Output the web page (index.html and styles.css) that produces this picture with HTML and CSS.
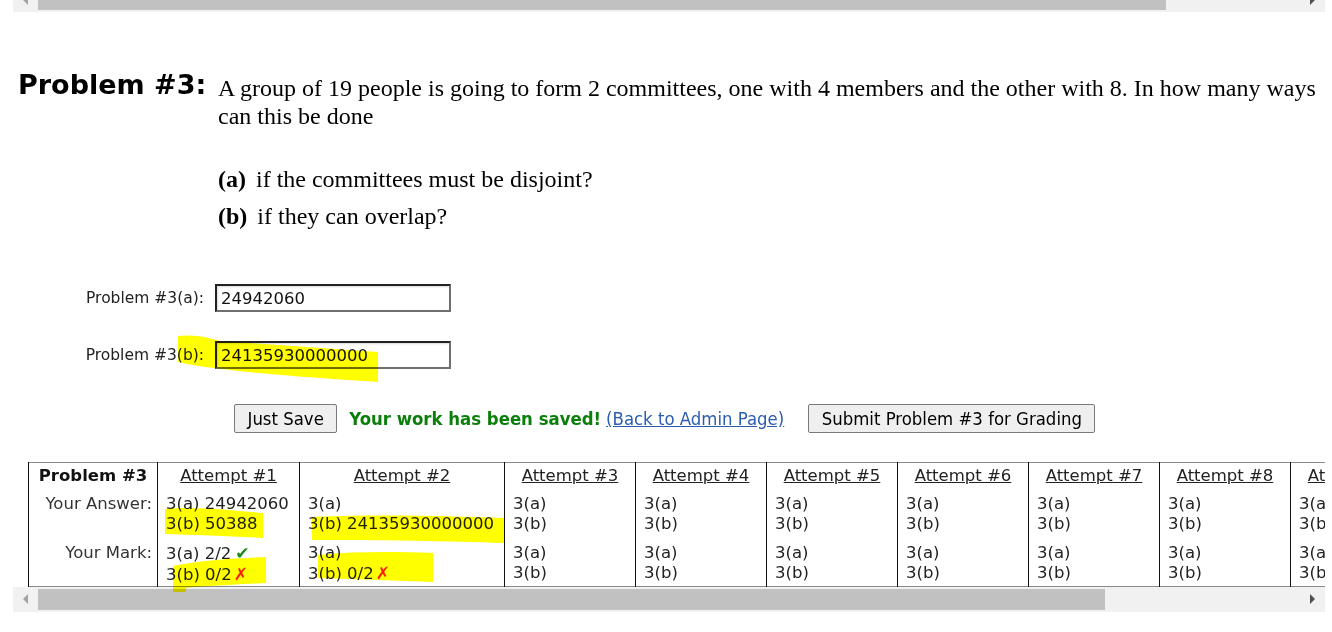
FILE: index.html
```html
<!DOCTYPE html>
<html>
<head>
<meta charset="utf-8">
<link rel="stylesheet" href="styles.css">
</head>
<body>
<div class="topscroll">
  <div class="sbar">
    <span class="sarrow sleft"></span>
    <div class="strack"><div class="sthumb top-thumb"></div></div>
    <span class="sarrow sright"></span>
  </div>
</div>

<div class="problem">
  <h2 class="ptitle">Problem #3:</h2>
  <div class="pbody">
    <p class="stmt">A group of 19 people is going to form 2 committees, one with 4 members and the other with 8. In how many ways can this be done</p>
    <div class="parts">
      <div class="part"><b class="plabel">(a)</b>if the committees must be disjoint?</div>
      <div class="part"><b class="plabel">(b)</b>if they can overlap?</div>
    </div>
  </div>
</div>

<div class="answers">
  <div class="arow"><label class="alabel">Problem #3(a):</label><input class="ainput" type="text" value="24942060"></div>
  <div class="arow"><label class="alabel">Problem #3(b):</label><input class="ainput" type="text" value="24135930000000"></div>
</div>

<div class="actions">
  <button class="btn">Just Save</button>
  <span class="saved">Your work has been saved!</span>
  <a class="back" href="#">(Back to Admin Page)</a>
  <button class="btn submit">Submit Problem #3 for Grading</button>
</div>

<div class="tablewrap">
  <div class="tableclip">
    <table class="attempts">
      <colgroup>
        <col class="c0"><col class="c1"><col class="c2"><col class="cn"><col class="cn"><col class="cn"><col class="cn"><col class="cn"><col class="cn"><col class="cn">
      </colgroup>
      <tr class="hrow">
        <th class="rowhead">Problem #3</th>
        <th><a href="#">Attempt #1</a></th>
        <th><a href="#">Attempt #2</a></th>
        <th><a href="#">Attempt #3</a></th>
        <th><a href="#">Attempt #4</a></th>
        <th><a href="#">Attempt #5</a></th>
        <th><a href="#">Attempt #6</a></th>
        <th><a href="#">Attempt #7</a></th>
        <th><a href="#">Attempt #8</a></th>
        <th><a href="#">Attempt #9</a></th>
      </tr>
      <tr class="ansrow">
        <td class="rowlabel">Your Answer:</td>
        <td>3(a) 24942060<br>3(b) 50388</td>
        <td>3(a)<br>3(b) 24135930000000</td>
        <td>3(a)<br>3(b)</td>
        <td>3(a)<br>3(b)</td>
        <td>3(a)<br>3(b)</td>
        <td>3(a)<br>3(b)</td>
        <td>3(a)<br>3(b)</td>
        <td>3(a)<br>3(b)</td>
        <td>3(a)<br>3(b)</td>
      </tr>
      <tr class="markrow">
        <td class="rowlabel">Your Mark:</td>
        <td>3(a) 2/2<span class="ok">✔</span><br>3(b) 0/2<span class="bad">✗</span></td>
        <td>3(a)<br>3(b) 0/2<span class="bad">✗</span></td>
        <td>3(a)<br>3(b)</td>
        <td>3(a)<br>3(b)</td>
        <td>3(a)<br>3(b)</td>
        <td>3(a)<br>3(b)</td>
        <td>3(a)<br>3(b)</td>
        <td>3(a)<br>3(b)</td>
        <td>3(a)<br>3(b)</td>
      </tr>
    </table>
  </div>
  <div class="sbar bottom">
    <span class="sarrow sleft"></span>
    <div class="strack"><div class="sthumb bottom-thumb"></div></div>
    <span class="sarrow sright"></span>
  </div>
</div>

<svg class="marks" width="1332" height="632" viewBox="0 0 1332 632" aria-hidden="true">
  <path d="M178,336 C195,334 210,338 220,341 L378,352 L378,382 C330,379 270,375 222,369 C205,367 190,365 178,362 Z"/>
  <path d="M165,509 C190,506 230,510 263,513 L263,538 C230,536 195,535 165,534 Z"/>
  <path d="M312,517 C380,514 450,516 504,518 L504,543 C450,541 380,540 312,540 Z"/>
  <path d="M318,555 C360,551 400,552 433,553 L433,582 C400,581 360,579 318,578 Z"/>
  <path d="M173,566 C200,560 240,558 266,557 L266,583 C230,585 200,586 186,588 L186,592 L173,592 Z"/>
</svg>
</body>
</html>
```

FILE: styles.css
```css
html, body {
  margin: 0;
  padding: 0;
  background: #ffffff;
}
body {
  width: 1332px;
  height: 632px;
  overflow: hidden;
  position: relative;
  font-family: "DejaVu Sans", Verdana, sans-serif;
  color: #111;
}

/* fake scrollbars */
.topscroll {
  height: 12px;
  overflow: hidden;
  display: flex;
  align-items: flex-end;
  margin-left: 13px;
  width: 1312px;
}
.sbar {
  display: flex;
  align-items: center;
  background: #f1f1f1;
  height: 24px;
  width: 1312px;
  flex: none;
}
.sbar.bottom {
  height: 25px;
}
.sarrow {
  width: 25px;
  height: 100%;
  display: flex;
  align-items: center;
  justify-content: center;
  flex: none;
}
.sarrow::before {
  content: "";
  display: block;
  width: 0;
  height: 0;
  border-top: 5px solid transparent;
  border-bottom: 5px solid transparent;
}
.sleft::before {
  border-right: 5px solid #a3a3a3;
}
.sright::before {
  border-left: 5px solid #505050;
}
.strack {
  flex: 1;
  height: 100%;
  display: flex;
  align-items: center;
}
.sthumb {
  background: #c1c1c1;
  height: calc(100% - 4px);
}
.top-thumb { width: 1128px; }
.bottom-thumb { width: 1067px; }

/* problem statement */
.problem {
  display: flex;
  padding-left: 18px;
  margin-top: 59px;
}
.ptitle {
  margin: 0;
  width: 200px;
  flex: none;
  font-family: "DejaVu Sans", Verdana, sans-serif;
  font-weight: bold;
  font-size: 27px;
  line-height: 27px;
  color: #000;
}
.pbody {
  width: 1108px;
  font-family: "Liberation Serif", "Times New Roman", serif;
  font-size: 24px;
  color: #000;
}
.stmt {
  margin: 0;
  line-height: 28px;
  padding-top: 3px;
}
.parts {
  margin-top: 36px;
  display: flex;
  flex-direction: column;
  gap: 11px;
}
.part {
  line-height: 26px;
}
.plabel {
  margin-right: 10px;
}

/* answers */
.answers {
  margin-top: 55px;
  display: flex;
  flex-direction: column;
  gap: 29px;
}
.arow {
  display: flex;
  align-items: center;
  height: 28px;
}
.alabel {
  width: 215px;
  text-align: right;
  padding-right: 11px;
  box-sizing: border-box;
  font-size: 15.5px;
  color: #222;
}
.ainput {
  box-sizing: border-box;
  width: 236px;
  height: 28px;
  margin: 0;
  padding: 0 4px;
  border-style: solid;
  border-width: 2px;
  border-color: #222 #6f6f6f #6f6f6f #222;
  box-shadow: inset 1px 1px 2px rgba(0,0,0,0.15);
  font-family: "DejaVu Sans", Verdana, sans-serif;
  font-size: 16.5px;
  color: #111;
  background: #fff;
}

/* actions */
.actions {
  margin-top: 35px;
  padding-left: 234px;
  display: flex;
  align-items: center;
  height: 29px;
  font-family: "DejaVu Sans Condensed", "Liberation Sans", sans-serif;
  font-size: 18.4px;
}
.btn {
  height: 29px;
  box-sizing: border-box;
  border: 1px solid #7a7a7a;
  border-radius: 2px;
  background: #efefef;
  font-family: "DejaVu Sans Condensed", "Liberation Sans", sans-serif;
  font-size: 18.4px;
  color: #000;
  padding: 0 12.5px;
  margin: 0;
}
.saved {
  margin-left: 12px;
  color: #0a7f0a;
  font-weight: bold;
}
.back {
  margin-left: 5px;
  color: #2a5db0;
  text-decoration: underline;
}
.submit {
  margin-left: 24px;
}

/* attempts table */
.tablewrap {
  margin-top: 29px;
  margin-left: 13px;
  width: 1312px;
}
.tableclip {
  overflow: hidden;
  padding-left: 15px;
}
.attempts {
  border-collapse: collapse;
  table-layout: fixed;
  width: 1393px;
  border: 1px solid #8a8a8a;
  font-family: "DejaVu Sans", Verdana, sans-serif;
  font-size: 16.5px;
  color: #222;
}
.c0 { width: 129px; }
.c1 { width: 142px; }
.c2 { width: 205px; }
.cn { width: 131px; }
.attempts th,
.attempts td {
  border-left: 1px solid #111;
  border-right: 1px solid #111;
  padding: 0 8px;
  white-space: nowrap;
  overflow: hidden;
  line-height: 20px;
  text-align: left;
  vertical-align: top;
}
.attempts th {
  height: 26px;
  text-align: center;
  vertical-align: middle;
  font-weight: normal;
  padding-top: 1px;
  box-sizing: border-box;
}
.attempts th a {
  color: #222;
  text-decoration: underline;
}
.attempts th.rowhead {
  font-weight: bold;
  color: #111;
  padding: 1px 0 0;
}
.attempts td.rowlabel {
  text-align: right;
  padding: 5px 5px 0 0;
  color: #333;
}
.ansrow td {
  padding-top: 5px;
}
.ansrow td,
.markrow td {
  line-height: 20.5px;
}
.markrow td {
  padding-top: 8px;
  padding-bottom: 0;
}
.markrow td.rowlabel {
  padding-top: 8px;
}
.ok {
  color: #1a8a1a;
  font-size: 17px;
  margin-left: 4px;
}
.bad {
  color: #ff1a1a;
  font-size: 17px;
  font-weight: bold;
  margin-left: 2px;
}

/* hand-drawn highlighter strokes (overlay) */
.marks {
  position: absolute;
  left: 0;
  top: 0;
  pointer-events: none;
  mix-blend-mode: multiply;
}
.marks path {
  fill: #ffff00;
}
```
